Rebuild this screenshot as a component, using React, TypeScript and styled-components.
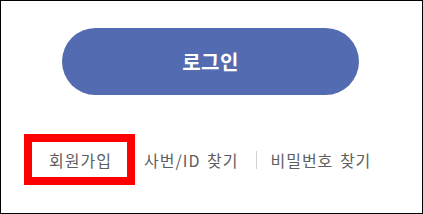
import styled, { createGlobalStyle } from "styled-components";

const Global = createGlobalStyle`
	html, body {
		margin: 0;
		padding: 0;
		background: #fff;
	}
	body {
		font-family: "Noto Sans CJK KR", "Noto Sans", sans-serif;
	}
`;

const Frame = styled.div`
	width: 423px;
	height: 214px;
	box-sizing: border-box;
	border: 1px solid #000;
	padding: 27px 0 0 23px;
	display: flex;
	flex-direction: column;
	align-items: flex-start;
`;

const LoginButton = styled.button`
	width: 297px;
	height: 67px;
	margin-left: 38px;
	border: none;
	border-radius: 34px;
	background: #536bb0;
	color: #fff;
	font-family: inherit;
	font-size: 20px;
	font-weight: 700;
	letter-spacing: 0.5px;
	cursor: pointer;
`;

const Links = styled.div`
	display: flex;
	align-items: center;
	margin-top: 39px;
`;

const Link = styled.a<{ $active?: boolean }>`
	display: flex;
	align-items: center;
	justify-content: center;
	width: ${(p) => (p.$active ? "111px" : "auto")};
	height: ${(p) => (p.$active ? "51px" : "auto")};
	box-sizing: border-box;
	border: ${(p) => (p.$active ? "8px solid #ff0000" : "none")};
	padding-left: ${(p) => (p.$active ? "2px" : "0")};
	margin-right: ${(p) => (p.$active ? "9px" : "0")};
	color: #5e5e5e;
	font-size: 16px;
	letter-spacing: 1px;
	word-spacing: 2px;
	text-decoration: none;
	cursor: pointer;
	white-space: nowrap;
`;

const Sep = styled.span`
	width: 1px;
	height: 18px;
	background: #d4d4d4;
	margin: 1px 13px 0 18px;
`;

export default function App() {
	return (
		<>
			<Global />
			<Frame>
				<LoginButton>로그인</LoginButton>
				<Links>
					<Link $active>회원가입</Link>
					<Link>사번/ID 찾기</Link>
					<Sep />
					<Link>비밀번호 찾기</Link>
				</Links>
			</Frame>
		</>
	);
}
